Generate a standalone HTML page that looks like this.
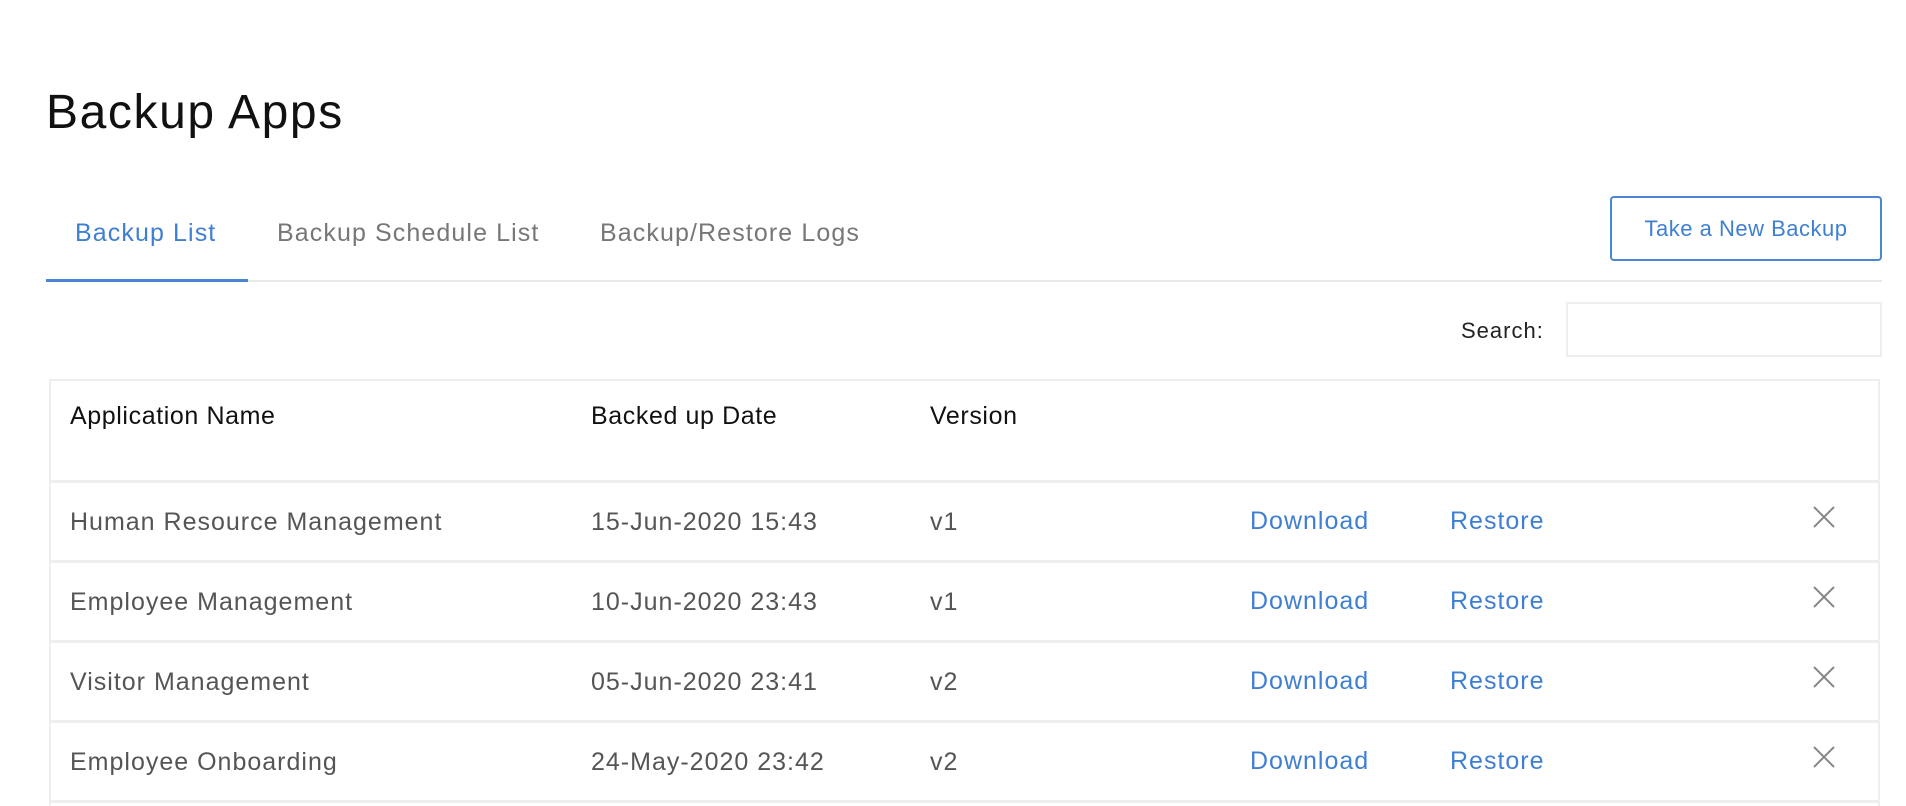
<!DOCTYPE html>
<html><head><meta charset="utf-8"><style>
*{margin:0;padding:0;box-sizing:border-box}
html,body{width:1906px;height:806px;overflow:hidden}
body{background:#fff;font-family:"Liberation Sans",sans-serif;position:relative;color:#222}
.a{position:absolute;white-space:nowrap;line-height:1}
h1{position:absolute;left:46px;top:89px;font-size:48px;font-weight:normal;color:#111;line-height:1;letter-spacing:1.6px}
.tab{font-size:25px;color:#777;top:221px;letter-spacing:1.1px}
.btn{position:absolute;left:1610px;top:196px;width:272px;height:65px;border:2px solid #4a86d4;border-radius:4px;color:#3f7fd2;font-size:22px;display:flex;align-items:center;justify-content:center;letter-spacing:0.5px}
.line{position:absolute;left:46px;top:280px;width:1836px;height:2px;background:#e8e8e8}
.act{position:absolute;left:46px;top:279px;width:202px;height:3px;background:#4a86d4}
.search{position:absolute;left:1566px;top:302px;width:316px;height:55px;border:2px solid #eee}
.tbl{position:absolute;left:49px;top:379px;width:1831px;height:427px;border:2px solid #eee;border-bottom:none}
.hr{position:absolute;left:49px;width:1831px;height:3px;background:#eee}
.th{font-size:25px;color:#111;top:404px;letter-spacing:0.6px}
.td{font-size:25px;color:#555;letter-spacing:1px}
.lk{font-size:25px;color:#3f7fd2;letter-spacing:1px}
.x{position:absolute;width:24px;height:24px}
</style></head><body>
<h1>Backup Apps</h1>
<div class="a tab" style="left:75px;color:#3f7fd2">Backup List</div>
<div class="a tab" style="left:277px">Backup Schedule List</div>
<div class="a tab" style="left:600px">Backup/Restore Logs</div>
<div class="btn">Take a New Backup</div>
<div class="line"></div><div class="act"></div>
<div class="a" style="left:1461px;top:320px;font-size:22px;color:#222;letter-spacing:1px">Search:</div>
<div class="search"></div>
<div class="tbl"></div>
<div class="hr" style="top:480px"></div>
<div class="hr" style="top:560px"></div>
<div class="hr" style="top:640px"></div>
<div class="hr" style="top:720px"></div>
<div class="hr" style="top:800px"></div>
<div class="a th" style="left:70px">Application Name</div>
<div class="a th" style="left:591px">Backed up Date</div>
<div class="a th" style="left:930px">Version</div>

<div class="a td" style="left:70px;top:510px">Human Resource Management</div>
<div class="a td" style="left:591px;top:510px">15-Jun-2020 15:43</div>
<div class="a td" style="left:930px;top:510px">v1</div>
<div class="a lk" style="left:1250px;top:509px">Download</div>
<div class="a lk" style="left:1450px;top:509px">Restore</div>
<svg class="x" style="left:1812px;top:505px" viewBox="0 0 24 24"><path d="M2 2L22 22M22 2L2 22" stroke="#888" stroke-width="2"/></svg>

<div class="a td" style="left:70px;top:590px">Employee Management</div>
<div class="a td" style="left:591px;top:590px">10-Jun-2020 23:43</div>
<div class="a td" style="left:930px;top:590px">v1</div>
<div class="a lk" style="left:1250px;top:589px">Download</div>
<div class="a lk" style="left:1450px;top:589px">Restore</div>
<svg class="x" style="left:1812px;top:585px" viewBox="0 0 24 24"><path d="M2 2L22 22M22 2L2 22" stroke="#888" stroke-width="2"/></svg>

<div class="a td" style="left:70px;top:670px">Visitor Management</div>
<div class="a td" style="left:591px;top:670px">05-Jun-2020 23:41</div>
<div class="a td" style="left:930px;top:670px">v2</div>
<div class="a lk" style="left:1250px;top:669px">Download</div>
<div class="a lk" style="left:1450px;top:669px">Restore</div>
<svg class="x" style="left:1812px;top:665px" viewBox="0 0 24 24"><path d="M2 2L22 22M22 2L2 22" stroke="#888" stroke-width="2"/></svg>

<div class="a td" style="left:70px;top:750px">Employee Onboarding</div>
<div class="a td" style="left:591px;top:750px">24-May-2020 23:42</div>
<div class="a td" style="left:930px;top:750px">v2</div>
<div class="a lk" style="left:1250px;top:749px">Download</div>
<div class="a lk" style="left:1450px;top:749px">Restore</div>
<svg class="x" style="left:1812px;top:745px" viewBox="0 0 24 24"><path d="M2 2L22 22M22 2L2 22" stroke="#888" stroke-width="2"/></svg>
</body></html>
